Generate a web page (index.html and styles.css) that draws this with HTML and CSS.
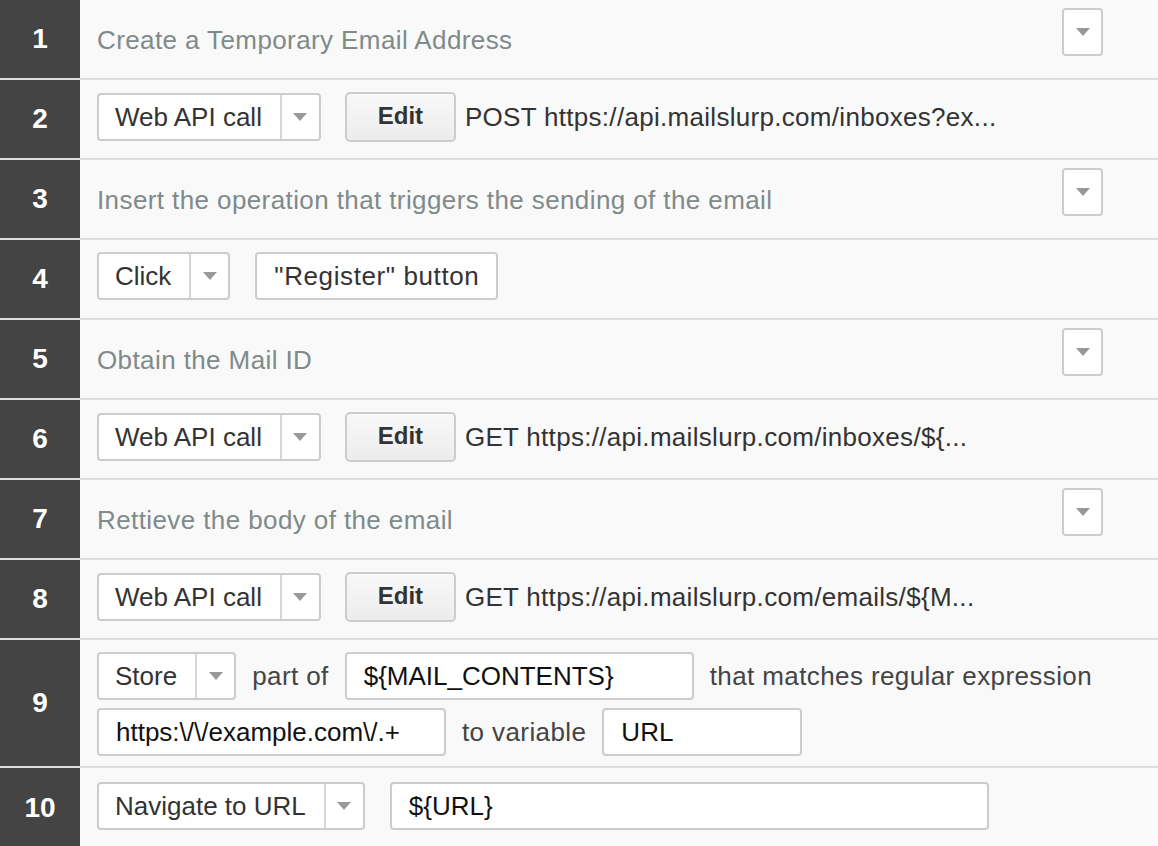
FILE: index.html
```html
<!DOCTYPE html>
<html lang="en">
<head>
    <meta charset="UTF-8">
    <meta name="viewport" content="width=device-width, initial-scale=1.0">
    <title>Test steps</title>
    <link rel="stylesheet" href="styles.css">
</head>
<body>
    <div class="steps">
        <div class="step">
            <div class="step-num">1</div>
            <div class="step-body comment">
                <span class="comment-text">Create a Temporary Email Address</span>
                <button class="step-menu"><span class="caret"></span></button>
            </div>
        </div>

        <div class="step">
            <div class="step-num">2</div>
            <div class="step-body">
                <div class="select"><span class="select-label">Web API call</span><span class="select-arrow"><span class="caret"></span></span></div>
                <button class="btn">Edit</button>
                <span class="detail">POST https://api.mailslurp.com/inboxes?ex...</span>
            </div>
        </div>

        <div class="step">
            <div class="step-num">3</div>
            <div class="step-body comment">
                <span class="comment-text">Insert the operation that triggers the sending of the email</span>
                <button class="step-menu"><span class="caret"></span></button>
            </div>
        </div>

        <div class="step">
            <div class="step-num">4</div>
            <div class="step-body">
                <div class="select"><span class="select-label">Click</span><span class="select-arrow"><span class="caret"></span></span></div>
                <span class="field target">"Register" button</span>
            </div>
        </div>

        <div class="step">
            <div class="step-num">5</div>
            <div class="step-body comment">
                <span class="comment-text">Obtain the Mail ID</span>
                <button class="step-menu"><span class="caret"></span></button>
            </div>
        </div>

        <div class="step">
            <div class="step-num">6</div>
            <div class="step-body">
                <div class="select"><span class="select-label">Web API call</span><span class="select-arrow"><span class="caret"></span></span></div>
                <button class="btn">Edit</button>
                <span class="detail">GET https://api.mailslurp.com/inboxes/${...</span>
            </div>
        </div>

        <div class="step">
            <div class="step-num">7</div>
            <div class="step-body comment">
                <span class="comment-text">Rettieve the body of the email</span>
                <button class="step-menu"><span class="caret"></span></button>
            </div>
        </div>

        <div class="step">
            <div class="step-num">8</div>
            <div class="step-body">
                <div class="select"><span class="select-label">Web API call</span><span class="select-arrow"><span class="caret"></span></span></div>
                <button class="btn">Edit</button>
                <span class="detail">GET https://api.mailslurp.com/emails/${M...</span>
            </div>
        </div>

        <div class="step">
            <div class="step-num">9</div>
            <div class="step-body">
                <div class="select"><span class="select-label">Store</span><span class="select-arrow"><span class="caret"></span></span></div>
                <span class="label">part of</span>
                <span class="field input input-wide">${MAIL_CONTENTS}</span>
                <span class="label">that matches regular expression</span>
                <span class="field input input-wide">https:\/\/example.com\/.+</span>
                <span class="label">to variable</span>
                <span class="field input input-short">URL</span>
            </div>
        </div>

        <div class="step">
            <div class="step-num">10</div>
            <div class="step-body">
                <div class="select"><span class="select-label">Navigate to URL</span><span class="select-arrow"><span class="caret"></span></span></div>
                <span class="field input input-long">${URL}</span>
            </div>
        </div>
    </div>
</body>
</html>
```

FILE: styles.css
```css
* {
    margin: 0;
    padding: 0;
    box-sizing: border-box;
}

body {
    font-family: 'Liberation Sans', Arial, Helvetica, sans-serif;
    font-size: 26px;
    color: #333;
    background: #f9f9f9;
}

.steps {
    width: 100%;
}

.step {
    display: flex;
    min-height: 80px;
    border-bottom: 2px solid #dedede;
}

.step:last-child {
    border-bottom: none;
}

.step:last-child .step-body {
    padding-top: 14px;
}

.step-num {
    width: 80px;
    flex-shrink: 0;
    background: #444;
    color: #fff;
    font-size: 28px;
    font-weight: bold;
    display: flex;
    align-items: center;
    justify-content: center;
}

.step-body {
    flex: 1;
    display: flex;
    flex-wrap: wrap;
    align-items: center;
    align-content: flex-start;
    gap: 8px 16px;
    padding: 12px 17px 10px;
    min-height: 78px;
    background: #f9f9f9;
}

/* comment rows: grey text with a small menu box on the right */
.step-body.comment {
    padding: 0 17px;
    align-items: center;
    align-content: center;
    flex-wrap: nowrap;
}

.comment-text {
    color: #7f8a8a;
    letter-spacing: 0.4px;
    margin-top: 2px;
}

.step-menu {
    margin-left: auto;
    margin-right: 38px;
    align-self: flex-start;
    margin-top: 8px;
    width: 41px;
    height: 48px;
    background: #fff;
    border: 2px solid #ccc;
    border-radius: 4px;
    display: flex;
    align-items: center;
    justify-content: center;
    cursor: pointer;
}

.caret {
    display: block;
    width: 0;
    height: 0;
    border-left: 7px solid transparent;
    border-right: 7px solid transparent;
    border-top: 8px solid #999;
}

.select {
    display: flex;
    height: 48px;
    background: #fff;
    border: 2px solid #ccc;
    border-radius: 4px;
}

.select-label {
    display: flex;
    align-items: center;
    padding: 0 18px 0 16px;
}

.select-arrow {
    width: 39px;
    border-left: 2px solid #d6d6d6;
    display: flex;
    align-items: center;
    justify-content: center;
}

.select + .field {
    margin-left: 9px;
}

.select + .btn {
    margin-left: 8px;
}

.btn {
    font-family: inherit;
    font-size: 24px;
    font-weight: bold;
    color: #333;
    width: 111px;
    height: 50px;
    padding-bottom: 2px;
    background: linear-gradient(#f9f9f9, #ececec);
    border: 2px solid #ccc;
    border-radius: 5px;
    cursor: pointer;
}

.btn + .detail {
    margin-left: -7px;
}

.detail {
    color: #333;
    letter-spacing: 0.3px;
}

.label {
    color: #444;
    letter-spacing: 0.4px;
}

.field {
    display: flex;
    align-items: center;
    height: 48px;
    padding: 0 17px;
    background: #fff;
    border: 2px solid #ccc;
    border-radius: 4px;
}

.target {
    letter-spacing: 0.6px;
}

.input {
    color: #111;
}

.input-wide {
    width: 349px;
}

.input-short {
    width: 200px;
}

.input-long {
    width: 599px;
}
```
